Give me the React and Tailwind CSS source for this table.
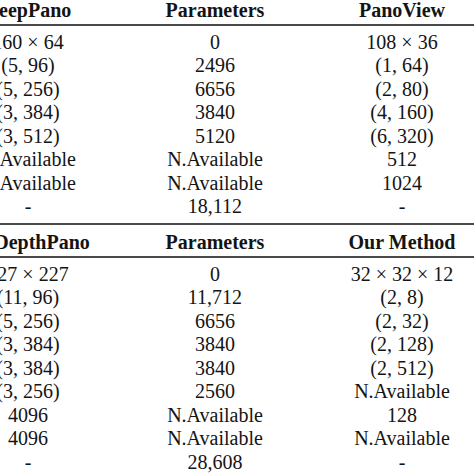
const table1 = {
    head: ['DeepPano', 'Parameters', 'PanoView'],
    rows: [
        ['160 × 64', '0', '108 × 36'],
        ['(5, 96)', '2496', '(1, 64)'],
        ['(5, 256)', '6656', '(2, 80)'],
        ['(3, 384)', '3840', '(4, 160)'],
        ['(3, 512)', '5120', '(6, 320)'],
        ['N.Available', 'N.Available', '512'],
        ['N.Available', 'N.Available', '1024'],
        ['-', '18,112', '-'],
    ],
};

const table2 = {
    head: ['DepthPano', 'Parameters', 'Our Method'],
    rows: [
        ['227 × 227', '0', '32 × 32 × 12'],
        ['(11, 96)', '11,712', '(2, 8)'],
        ['(5, 256)', '6656', '(2, 32)'],
        ['(3, 384)', '3840', '(2, 128)'],
        ['(3, 384)', '3840', '(2, 512)'],
        ['(3, 256)', '2560', 'N.Available'],
        ['4096', 'N.Available', '128'],
        ['4096', 'N.Available', 'N.Available'],
        ['-', '28,608', '-'],
    ],
};

function Rows({ rows }) {
    return (
        <div>
            {rows.map((row, i) => (
                <div key={i} className="grid grid-cols-3 h-[23.5px] leading-[23.5px] text-center whitespace-nowrap">
                    {row.map((cell, j) => (
                        <span key={j}>{cell}</span>
                    ))}
                </div>
            ))}
        </div>
    );
}

export default function App() {
    return (
        <div
            className="w-[474px] h-[474px] overflow-hidden bg-white text-[#141414] text-[20px]"
            style={{ fontFamily: '"Liberation Serif", "Times New Roman", serif' }}
        >
            <div className="ml-[-65.5px] w-[561px]">
                {/* first table */}
                <div className="grid grid-cols-3 h-[21px] leading-[21px] text-center font-bold whitespace-nowrap">
                    {table1.head.map((h) => (
                        <span key={h}>{h}</span>
                    ))}
                </div>
                <div className="mt-[3px] h-[2px] bg-[#4a4a4a]" />
                <div className="pt-[4.75px]">
                    <Rows rows={table1.rows} />
                </div>
                <div className="mt-[4.25px] h-[2px] bg-[#4a4a4a]" />

                {/* second table */}
                <div className="mt-[5px] grid grid-cols-3 h-[24px] leading-[24px] text-center font-bold whitespace-nowrap">
                    <span className="pl-[28px]">{table2.head[0]}</span>
                    <span>{table2.head[1]}</span>
                    <span>{table2.head[2]}</span>
                </div>
                <div className="mt-[2px] h-[2px] bg-[#4a4a4a]" />
                <div className="pt-[4.75px]">
                    <Rows rows={table2.rows} />
                </div>
            </div>
        </div>
    );
}
